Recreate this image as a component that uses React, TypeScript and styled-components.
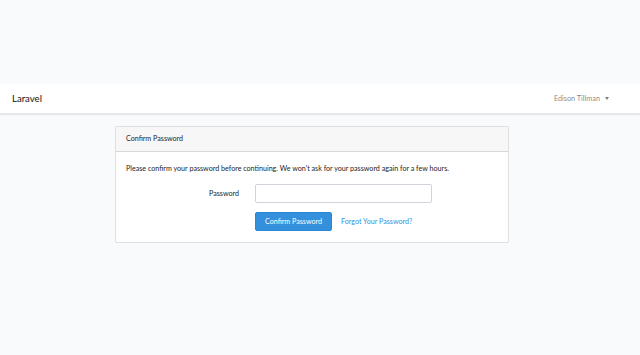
import React from "react";
import styled, { createGlobalStyle } from "styled-components";

const Global = createGlobalStyle`
  html, body { margin: 0; padding: 0; background: #f8fafc; }
  body { font-family: "Lato", "Noto Sans", sans-serif; color: #212529; font-size: 7.15px; line-height: 1.6; }
  * { box-sizing: border-box; }
`;

const Page = styled.div`
  width: 640px;
  height: 355px;
  padding-top: 84px;
  background: #f8fafc;
`;

const Navbar = styled.nav`
  height: 30px;
  background: #fff;
  box-shadow: 0 1px 1px rgba(0, 0, 0, 0.08);
  border-bottom: 1px solid #e6e9ee;
  display: flex;
  align-items: center;
  justify-content: space-between;
  padding: 0 31px 0 12px;
`;

const Brand = styled.a`
  font-size: 9.6px;
  color: #111;
  text-decoration: none;
`;

const UserMenu = styled.a`
  display: flex;
  align-items: center;
  gap: 5px;
  font-size: 7.3px;
  color: rgba(0, 0, 0, 0.5);
`;

const Caret = styled.span`
  width: 0;
  height: 0;
  border-left: 2.5px solid transparent;
  border-right: 2.5px solid transparent;
  border-top: 3px solid rgba(0, 0, 0, 0.5);
`;

const Main = styled.main`
  display: flex;
  justify-content: center;
  padding: 12px 16px 0 0;
`;

const Card = styled.div`
  width: 394px;
  background: #fff;
  border: 1px solid rgba(0, 0, 0, 0.125);
  border-radius: 2px;
`;

const CardHeader = styled.div`
  height: 25px;
  padding: 0 10px;
  display: flex;
  align-items: center;
  background: #f7f7f7;
  border-bottom: 1px solid rgba(0, 0, 0, 0.125);
`;

const CardBody = styled.div`
  padding: 11px 10px 11px;
`;

const Intro = styled.p`
  margin: 0 0 9px;
  line-height: 12px;
`;

const Row = styled.div`
  display: grid;
  grid-template-columns: 113px 177px;
  column-gap: 16px;
  align-items: center;
  margin-bottom: 9px;
`;

const Label = styled.label`
  text-align: right;
`;

const Input = styled.input`
  height: 19px;
  width: 177px;
  border: 1px solid #ced4da;
  border-radius: 2px;
  background: #fff;
  outline: none;
`;

const Actions = styled.div`
  display: flex;
  align-items: center;
  gap: 9px;
  padding-left: 129px;
`;

const Button = styled.button`
  height: 19px;
  width: 77px;
  padding: 0;
  border: 1px solid #2a87d6;
  border-radius: 2px;
  background: #3490dc;
  color: #fff;
  font-family: inherit;
  font-size: 7.15px;
`;

const Link = styled.a`
  color: #3490dc;
  text-decoration: none;
`;

export default function App() {
  return (
    <>
      <Global />
      <Page>
        <Navbar>
          <Brand>Laravel</Brand>
          <UserMenu>
            Edison Tillman <Caret />
          </UserMenu>
        </Navbar>
        <Main>
          <Card>
            <CardHeader>Confirm Password</CardHeader>
            <CardBody>
              <Intro>
                Please confirm your password before continuing. We won't ask for your password again for a few hours.
              </Intro>
              <Row>
                <Label>Password</Label>
                <Input type="password" />
              </Row>
              <Actions>
                <Button>Confirm Password</Button>
                <Link>Forgot Your Password?</Link>
              </Actions>
            </CardBody>
          </Card>
        </Main>
      </Page>
    </>
  );
}
